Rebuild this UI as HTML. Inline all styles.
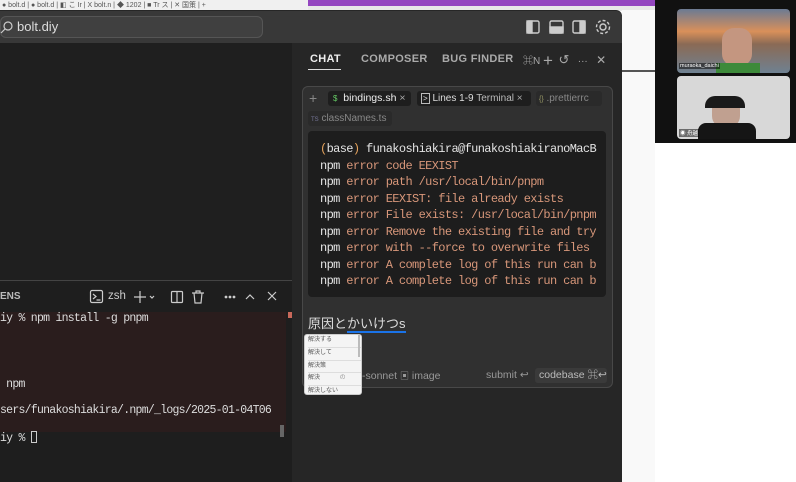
<!DOCTYPE html>
<html><head><meta charset="utf-8"><style>
*{margin:0;padding:0;box-sizing:border-box}
body{width:796px;height:482px;overflow:hidden;background:#fff;position:relative;font-family:"Liberation Sans","Noto Sans CJK JP",sans-serif}
.a{position:absolute}
.mono{font-family:"Liberation Mono","DejaVu Sans Mono",monospace}
.tab{position:absolute;top:0;height:9px;font-size:7px;color:#555}
</style></head><body>
<div class="a" style="left:0;top:0;width:308px;height:10px;background:#f0f0f0"></div>
<div class="tab" style="left:2px">● bolt.d | ● bolt.d | ◧ こ Ir | X bolt.n | ◆ 1202 | ■ Tr ス | ✕ 国策 | +</div>
<div class="a" style="left:308px;top:0;width:347px;height:6px;background:#9446c0"></div>
<div class="a" style="left:308px;top:6px;width:347px;height:5px;background:#e8e8e8"></div>
<div class="a" style="left:0;top:10px;width:622px;height:472px;background:#262626;border-top-right-radius:6px"></div>
<div class="a" style="left:0;top:11px;width:622px;height:32px;background:#383838;border-top-right-radius:6px"></div>
<div class="a" style="left:0;top:16px;width:263px;height:22px;border:1px solid #555;border-radius:6px;background:#404040;color:#ddd;font-size:13px;line-height:20px;padding-left:16px">bolt.diy</div>
<svg class="a" style="left:0;top:20px" width="14" height="14"><circle cx="8" cy="6" r="4" stroke="#ccc" fill="none" stroke-width="1.2"/><line x1="5" y1="9" x2="1" y2="13" stroke="#ccc" stroke-width="1.2"/></svg>
<svg class="a" style="left:524px;top:19px" width="100" height="18" fill="none" stroke="#ccc" stroke-width="1.4">
<rect x="3" y="2" width="12" height="12" rx="1.5"/><rect x="3" y="2" width="5" height="12" fill="#ccc"/>
<rect x="26" y="2" width="13" height="12" rx="1.5"/><rect x="26" y="8" width="13" height="6" fill="#ccc"/>
<rect x="49" y="2" width="12" height="12" rx="1.5"/><rect x="56" y="2" width="5" height="12" fill="#ccc"/>
<circle cx="79" cy="8" r="3"/><circle cx="79" cy="8" r="6.5" stroke-dasharray="3 2"/>
</svg>
<div class="a" style="left:0;top:43px;width:292px;height:240px;background:#1f1f1f"></div>
<div class="a" style="left:0;top:280px;width:292px;height:1px;background:#444"></div>
<div class="a" style="left:0;top:283px;width:292px;height:199px;background:#1e1e1e"></div>
<div class="a" style="left:0;top:291px;font-size:10px;font-weight:bold;color:#bbb">ENS</div>
<svg class="a" style="left:88px;top:287px" width="195" height="20" fill="none" stroke="#ccc" stroke-width="1.2">
<rect x="2.5" y="3.5" width="12" height="12" rx="1.5"/><path d="M5 7l3 2.5-3 2.5M8.5 13h4"/>
<path d="M52 4v12M46 10h12M62 9l2 2 2-2"/>
<rect x="83.5" y="4.5" width="11" height="11" rx="1"/><path d="M89 4.5v11"/>
<path d="M104 6h12M108 6V4h4v2M106 6l1 10h6l1-10"/>
<circle cx="138" cy="10" r=".8" fill="#ccc"/><circle cx="142" cy="10" r=".8" fill="#ccc"/><circle cx="146" cy="10" r=".8" fill="#ccc"/>
<path d="M158 12l4-4 4 4M180 5l8 8M188 5l-8 8"/>
</svg>
<div class="a" style="left:108px;top:290px;font-size:11.5px;color:#ccc">zsh</div>
<div class="a" style="left:0;top:312px;width:286px;height:120px;background:#2a1d1d"></div>
<div class="a" style="left:288px;top:312px;width:4px;height:6px;background:#c8685a"></div>
<div class="a" style="left:280px;top:425px;width:4px;height:12px;background:#666"></div>
<div class="a mono" style="left:0;top:312px;font-size:11.5px;letter-spacing:-0.74px;color:#ddd;line-height:13.2px;white-space:pre">iy % npm install -g pnpm




 npm

sers/funakoshiakira/.npm/_logs/2025-01-04T06

iy % <span style="display:inline-block;width:6px;height:12px;border:1px solid #ccc;vertical-align:-2px"></span></div>
<div class="a" style="left:292px;top:43px;width:330px;height:439px;background:#262626"></div>
<div class="a" style="left:310px;top:53px;font-size:11px;font-weight:bold;color:#eee;letter-spacing:.3px">CHAT</div>
<div class="a" style="left:308px;top:69px;width:33px;height:1px;background:#ddd"></div>
<div class="a" style="left:361px;top:53px;font-size:11px;font-weight:bold;color:#aaa;letter-spacing:.3px">COMPOSER</div>
<div class="a" style="left:442px;top:53px;font-size:11px;font-weight:bold;color:#aaa;letter-spacing:.3px">BUG FINDER</div>
<div class="a" style="left:523px;top:51px;font-size:10px;color:#aaa;white-space:nowrap">⌘N <span style="font-size:17px;vertical-align:-2px">+</span> &nbsp;<span style="font-size:13px">↺</span> &nbsp;&nbsp;··· &nbsp;&nbsp;<span style="font-size:12px">✕</span></div>
<div class="a" style="left:302px;top:86px;width:311px;height:302px;background:#303030;border:1px solid #484848;border-radius:6px"></div>
<div class="a" style="left:309px;top:90px;font-size:14px;color:#888">+</div>
<div class="a" style="left:328px;top:91px;width:83px;height:15px;background:#1e1e1e;border-radius:3px;font-size:10.5px;color:#eee;line-height:15px;padding-left:5px;white-space:nowrap"><span style="color:#6c6;font-size:8px">$</span> &nbsp;bindings.sh <span style="color:#aaa">×</span></div>
<div class="a" style="left:417px;top:91px;width:114px;height:15px;background:#1e1e1e;border-radius:3px;font-size:10px;color:#ddd;line-height:15px;padding-left:4px;white-space:nowrap"><span style="font-size:8px;border:1px solid #bbb;padding:0 1px">&gt;</span> Lines 1-9 <span style="color:#bbb">Terminal</span> <span style="color:#aaa">×</span></div>
<div class="a" style="left:536px;top:91px;width:66px;height:15px;background:#2a2a2a;border-radius:3px;font-size:10px;color:#888;line-height:15px;padding-left:3px;white-space:nowrap"><span style="color:#996;font-size:7px">{}</span> .prettierrc</div>
<div class="a" style="left:308px;top:111px;width:84px;height:15px;background:#2a2a2a;border-radius:3px;font-size:10px;color:#888;line-height:15px;padding-left:3px;white-space:nowrap"><span style="font-size:6px;color:#779">TS</span> classNames.ts</div>
<div class="a" style="left:308px;top:131px;width:298px;height:166px;background:#1d1d1d;border-radius:4px"></div>
<div class="a mono" style="left:320px;top:141px;width:280px;overflow:hidden;font-size:12px;letter-spacing:-0.63px;line-height:16.5px;color:#e4e4e4;white-space:pre"><span style="color:#e6a35c">(</span>base<span style="color:#e6a35c">)</span> funakoshiakira@funakoshiakiranoMacB
npm <span style="color:#d8977a">error code EEXIST</span>
npm <span style="color:#d8977a">error path /usr/local/bin/pnpm</span>
npm <span style="color:#d8977a">error EEXIST: file already exists</span>
npm <span style="color:#d8977a">error File exists: /usr/local/bin/pnpm</span>
npm <span style="color:#d8977a">error Remove the existing file and try</span>
npm <span style="color:#d8977a">error with --force to overwrite files</span>
npm <span style="color:#d8977a">error A complete log of this run can b</span>
npm <span style="color:#d8977a">error A complete log of this run can b</span></div>
<div class="a" style="left:308px;top:313px;font-size:13px;color:#ddd;white-space:nowrap">原因と<span style="border-bottom:2px solid #1a73e8">かいけつs</span></div>
<div class="a" style="left:362px;top:369px;font-size:10.5px;color:#999;white-space:nowrap">-sonnet <span style="font-size:9px">▣</span> image</div>
<div class="a" style="left:486px;top:369px;font-size:10.5px;color:#999">submit ↩</div>
<div class="a" style="left:535px;top:368px;width:72px;height:15px;background:#3a3a3a;border-radius:3px;font-size:10.5px;color:#bbb;line-height:15px;padding-left:4px;white-space:nowrap">codebase ⌘↩</div>
<div class="a" style="left:304px;top:334px;width:58px;height:61px;background:#f4f4f4;border-radius:3px;border:1px solid #ccc;font-size:6px;color:#555;line-height:11.8px;padding-left:3px;overflow:hidden">
<div style="border-bottom:1px solid #ddd">解決する</div><div style="border-bottom:1px solid #ddd">解決して</div><div style="border-bottom:1px solid #ddd">解決策</div><div style="border-bottom:1px solid #ddd">解決 <span style="margin-left:18px;color:#999">の</span></div><div>解決しない</div></div>
<div class="a" style="left:358px;top:335px;width:2px;height:22px;background:#bbb"></div>
<div class="a" style="left:622px;top:10px;width:33px;height:472px;background:#f9f9f9"></div>
<div class="a" style="left:622px;top:70px;width:33px;height:2px;background:#555"></div>
<div class="a" style="left:655px;top:143px;width:141px;height:339px;background:#fff"></div>
<div class="a" style="left:655px;top:0;width:141px;height:143px;background:#111"></div>
<div class="a" style="left:677px;top:9px;width:113px;height:64px;border-radius:4px;background:linear-gradient(180deg,#6b7a93 0%,#d9905a 35%,#8a6a55 55%,#6f8192 100%)"></div>
<div class="a" style="left:722px;top:28px;width:30px;height:38px;border-radius:12px;background:#c49680"></div>
<div class="a" style="left:716px;top:63px;width:44px;height:10px;background:#3d8a3a"></div>
<div class="a" style="left:679px;top:63px;font-size:5.5px;color:#fff;background:rgba(0,0,0,.5);padding:0 1px">muraoka_daichi</div>
<div class="a" style="left:677px;top:76px;width:113px;height:63px;border-radius:4px;background:#d8d8d8"></div>
<div class="a" style="left:712px;top:96px;width:28px;height:32px;border-radius:12px;background:#c0a090"></div>
<div class="a" style="left:705px;top:96px;width:40px;height:12px;border-radius:10px 10px 0 0;background:#1a1a1a"></div>
<div class="a" style="left:698px;top:123px;width:58px;height:16px;border-radius:8px 8px 0 0;background:#151515"></div>
<div class="a" style="left:679px;top:129px;font-size:5.5px;color:#fff;background:rgba(0,0,0,.5);padding:0 1px">◉ 舟越</div>
</body></html>
